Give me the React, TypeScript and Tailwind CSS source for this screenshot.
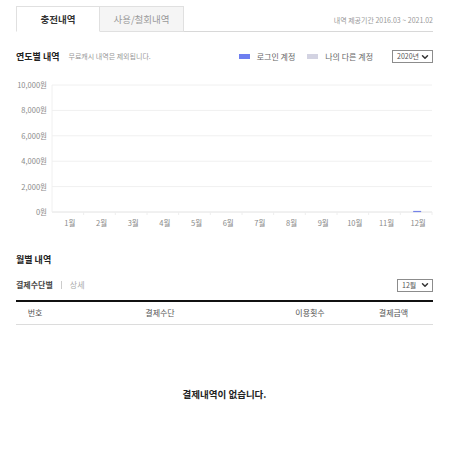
import React from "react";
import { ChevronDown } from "lucide-react";

const font = { fontFamily: '"Noto Sans CJK KR", "Noto Sans", sans-serif' };

const yLabels = ["10,000원", "8,000원", "6,000원", "4,000원", "2,000원", "0원"];
const months = Array.from({ length: 12 }, (_, i) => `${i + 1}월`);

function Select({ label, w }: { label: string; w: string }) {
  return (
    <div
      className={`flex h-[13px] ${w} items-center justify-between whitespace-nowrap border border-[#8c8c8c] bg-white pl-[4px] pr-[2px] text-[7px] leading-none text-[#555]`}
    >
      <span>{label}</span>
      <ChevronDown size={10} strokeWidth={3.5} className="shrink-0 text-[#333]" />
    </div>
  );
}

function Chart() {
  // plot area in svg coords (container starts at page x=16)
  const left = 36;
  const right = 416;
  const top = 10;
  const step = 25.4;
  const colW = (right - left) / 12;
  return (
    <svg width={417} height={160} className="block">
      {yLabels.map((l, i) => {
        const y = top + i * step;
        return (
          <g key={l}>
            <line
              x1={left}
              x2={right}
              y1={y}
              y2={y}
              stroke={i === 5 ? "#e2e2e2" : "#f0f0f0"}
              strokeWidth={1}
            />
            <text
              x={31}
              y={y + 3}
              textAnchor="end"
              fontSize={7.5}
              fill="#8a8a8a"
              style={font}
            >
              {l}
            </text>
          </g>
        );
      })}
      <line x1={left} x2={left} y1={top} y2={top + 5 * step} stroke="#f0f0f0" />
      {months.map((m, i) => {
        const cx = left + colW * i + colW / 2 + 2;
        return (
          <g key={m}>
            <line
              x1={left + colW * (i + 1)}
              x2={left + colW * (i + 1)}
              y1={top + 5 * step}
              y2={top + 5 * step + 3}
              stroke="#eeeeee"
            />
            <text
              x={cx}
              y={top + 5 * step + 14}
              textAnchor="middle"
              fontSize={7.5}
              fill="#8a8a8a"
              style={font}
            >
              {m}
            </text>
          </g>
        );
      })}
      <line
        x1={left + colW * 11 + colW / 2 - 3}
        x2={left + colW * 11 + colW / 2 + 5}
        y1={top + 5 * step - 0.5}
        y2={top + 5 * step - 0.5}
        stroke="#7482e8"
        strokeWidth={1.2}
      />
    </svg>
  );
}

export default function App() {
  return (
    <div className="min-h-[453px] w-[474px] bg-white" style={font}>
      <div className="ml-4 w-[417px] pt-[6px]">
        {/* tabs */}
        <div className="flex h-[26px] items-end border-b border-[#d8d8d8]">
          <div className="-mb-px flex h-[26px] w-[84px] items-center justify-center border border-b-white border-[#e0e0e0] bg-white text-[9.5px] font-bold text-[#333]">
            충전내역
          </div>
          <div className="-mb-px flex h-[26px] w-[84px] items-center justify-center border border-l-0 border-[#e0e0e0] bg-[#f5f5f5] text-[9.5px] text-[#999]">
            사용/철회내역
          </div>
          <div className="ml-auto pb-[6px] text-[7px] text-[#999]">
            내역 제공기간 2016.03 ~ 2021.02
          </div>
        </div>

        {/* year section header */}
        <div className="mt-[18px] flex h-[13px] items-center">
          <span className="text-[9px] font-bold text-[#222]">연도별 내역</span>
          <span className="ml-[9px] text-[7px] text-[#999]">
            무료캐시 내역은 제외됩니다.
          </span>
          <div className="ml-auto flex items-center text-[8px] text-[#666]">
            <span className="mr-[7px] h-[5px] w-[11px] bg-[#6e7ff0]" />
            <span>로그인 계정</span>
            <span className="ml-[12px] mr-[7px] h-[5px] w-[11px] bg-[#d3d3e2]" />
            <span>나의 다른 계정</span>
            <div className="ml-[19px]">
              <Select label="2020년" w="w-[41px]" />
            </div>
          </div>
        </div>

        {/* chart */}
        <div className="mt-[12px]">
          <Chart />
        </div>

        {/* month section */}
        <div className="mt-[18px] text-[9px] font-bold text-[#222]">월별 내역</div>
        <div className="mt-[12px] flex h-[13px] items-center">
          <span className="text-[8px] font-bold text-[#444]">결제수단별</span>
          <span className="mx-[8px] h-[8px] w-px bg-[#ccc]" />
          <span className="text-[8px] text-[#aaa]">상세</span>
          <div className="ml-auto">
            <Select label="12월" w="w-[36px]" />
          </div>
        </div>

        {/* table */}
        <div className="mt-[8px] border-t-2 border-[#111]">
          <div className="flex h-[23px] items-center border-b border-[#dcdcdc] text-[8px] text-[#555]">
            <span className="w-[38px] text-center">번호</span>
            <span className="w-[212px] text-center">결제수단</span>
            <span className="w-[88px] text-center">이용횟수</span>
            <span className="w-[79px] text-center">결제금액</span>
          </div>
          <div className="flex h-[140px] items-center justify-center text-[9.5px] font-bold text-[#222]">
            결제내역이 없습니다.
          </div>
        </div>
      </div>
    </div>
  );
}
